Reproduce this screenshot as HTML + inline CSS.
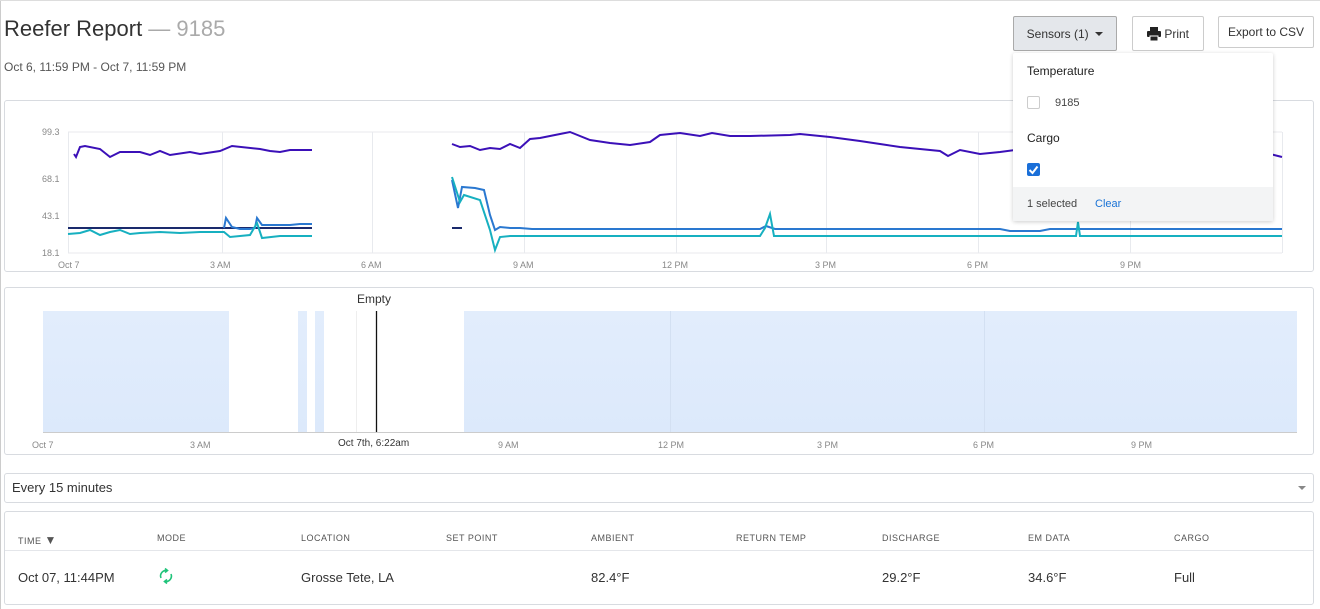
<!DOCTYPE html>
<html><head><meta charset="utf-8"><style>
*{box-sizing:border-box;margin:0;padding:0}
body{width:1320px;height:609px;background:#fff;font-family:"Liberation Sans",sans-serif;color:#333;position:relative;overflow:hidden}
.abs{position:absolute}
.panel{position:absolute;border:1px solid #d8dbe0;border-radius:3px;background:#fff}
.btn{position:absolute;border:1px solid #ccc;border-radius:2px;font-size:12px;color:#333;display:flex;align-items:center;justify-content:center;background:#fff}
.ax{position:absolute;font-size:9px;color:#888}
.th{position:absolute;top:533px;font-size:9px;color:#555;letter-spacing:.5px}
.td{position:absolute;top:570px;font-size:13px;color:#333}
</style></head><body>
<div class="abs" style="left:0;top:0;width:1px;height:609px;background:#ccc"></div>
<div class="abs" style="left:0;top:0;width:1320px;height:1px;background:#ddd"></div>
<div class="abs" style="left:4px;top:16px;font-size:22px;color:#333">Reefer Report <span style="color:#aaa">— 9185</span></div>
<div class="abs" style="left:4px;top:60px;font-size:12px;color:#555">Oct 6, 11:59 PM - Oct 7, 11:59 PM</div>

<div class="panel" style="left:4px;top:100px;width:1310px;height:172px"></div>
<svg class="abs" style="left:0;top:0" width="1320" height="280">
<g stroke="#e8eaee" stroke-width="1">
<line x1="68" y1="132" x2="1282" y2="132"/><line x1="68" y1="253" x2="1282" y2="253"/>
<line x1="68.5" y1="132" x2="68.5" y2="253"/><line x1="222.5" y1="132" x2="222.5" y2="253"/><line x1="372.5" y1="132" x2="372.5" y2="253"/><line x1="524.5" y1="132" x2="524.5" y2="253"/><line x1="676.5" y1="132" x2="676.5" y2="253"/><line x1="826.5" y1="132" x2="826.5" y2="253"/><line x1="978.5" y1="132" x2="978.5" y2="253"/><line x1="1130.5" y1="132" x2="1130.5" y2="253"/><line x1="1282.5" y1="132" x2="1282.5" y2="253"/>
</g>
<g fill="none" stroke-width="2">
<polyline stroke="#3b10b8" points="74,154 76,157 80,147 85,146 100,149 110,157 120,152 140,152 150,155 160,151 170,155 190,152 200,154 220,151 232,146 260,149 270,151 280,152 290,150 312,150"/>
<polyline stroke="#3b10b8" points="452,144 460,147 470,146 480,150 490,148 500,149 510,144 520,148 530,139 540,138 555,135 570,132 575,134 590,140 610,143 630,145 650,142 660,135 680,133 700,136 712,133 730,136 750,136 790,135 800,134 830,137 860,141 880,144 900,147 920,149 940,151 948,156 960,150 980,154 1000,152 1030,148 1060,145 1120,145 1200,148 1270,154 1282,157"/>
<line stroke="#1a2a6c" x1="68" y1="228" x2="312" y2="228"/>
<line stroke="#1a2a6c" x1="452" y1="228" x2="462" y2="228"/>
<polyline stroke="#2a78d0" points="224,228 226,218 232,227 240,229 250,229 255,228 257,218 262,225 290,225 300,224 312,224"/>
<polyline stroke="#2a78d0" points="452,180 458,208 462,187 475,188 484,190 490,215 495,230 500,227 510,228 520,228 532,229 680,229 760,229 766,226 775,229 1000,229 1010,231 1040,231 1050,229 1282,229"/>
<polyline stroke="#17b0c0" points="68,234 80,233 90,230 100,235 110,232 120,230 130,234 140,233 160,232 180,233 200,232 224,232 230,237 240,236 250,235 257,223 262,238 280,236 312,236"/>
<polyline stroke="#17b0c0" points="452,177 460,202 464,195 480,200 490,230 495,250 500,237 510,236 600,236 760,236 765,228 770,214 774,236 1076,236 1078,222 1080,236 1282,236"/>
</g>
</svg>
<div class="ax" style="left:42px;top:127px">99.3</div><div class="ax" style="left:42px;top:174px">68.1</div><div class="ax" style="left:42px;top:211px">43.1</div><div class="ax" style="left:42px;top:248px">18.1</div>
<div class="ax" style="left:58px;top:260px">Oct 7</div><div class="ax" style="left:210px;top:260px">3 AM</div><div class="ax" style="left:361px;top:260px">6 AM</div><div class="ax" style="left:513px;top:260px">9 AM</div><div class="ax" style="left:662px;top:260px">12 PM</div><div class="ax" style="left:815px;top:260px">3 PM</div><div class="ax" style="left:967px;top:260px">6 PM</div><div class="ax" style="left:1120px;top:260px">9 PM</div>

<div class="panel" style="left:4px;top:287px;width:1310px;height:168px"></div>
<svg class="abs" style="left:0;top:280px" width="1320" height="180">
<defs><linearGradient id="g" x1="0" y1="0" x2="0" y2="1"><stop offset="0" stop-color="#e2edfc"/><stop offset="1" stop-color="#dce9fb"/></linearGradient></defs>
<rect x="43" y="31" width="186" height="121" fill="url(#g)"/>
<rect x="298" y="31" width="9" height="121" fill="url(#g)"/>
<rect x="315" y="31" width="9" height="121" fill="url(#g)"/>
<rect x="464" y="31" width="833" height="121" fill="url(#g)"/>
<line x1="670.5" y1="31" x2="670.5" y2="152" stroke="#d3e0f2"/>
<line x1="984.5" y1="31" x2="984.5" y2="152" stroke="#d3e0f2"/>
<line x1="356.5" y1="31" x2="356.5" y2="152" stroke="#eee"/>
<line x1="376.5" y1="31" x2="376.5" y2="152" stroke="#111" stroke-width="1.3"/>
<line x1="43" y1="152.5" x2="1297" y2="152.5" stroke="#ccc"/>
</svg>
<div class="abs" style="left:357px;top:292px;font-size:12px;color:#333">Empty</div>
<div class="ax" style="left:32px;top:440px">Oct 7</div><div class="ax" style="left:190px;top:440px">3 AM</div><div class="abs" style="left:338px;top:438px;font-size:10px;color:#333">Oct 7th, 6:22am</div><div class="ax" style="left:498px;top:440px">9 AM</div><div class="ax" style="left:658px;top:440px">12 PM</div><div class="ax" style="left:817px;top:440px">3 PM</div><div class="ax" style="left:973px;top:440px">6 PM</div><div class="ax" style="left:1131px;top:440px">9 PM</div>

<div class="panel" style="left:4px;top:473px;width:1310px;height:30px"></div>
<div class="abs" style="left:12px;top:480px;font-size:13px;color:#333">Every 15 minutes</div>
<div class="abs" style="left:1298px;top:486px;border-left:4px solid transparent;border-right:4px solid transparent;border-top:4px solid #888"></div>

<div class="panel" style="left:4px;top:511px;width:1310px;height:94px"></div>
<div class="abs" style="left:5px;top:550px;width:1308px;height:1px;background:#e4e6ea"></div>
<div class="th" style="left:18px">TIME <span style="font-size:12px;color:#555">▼</span></div>
<div class="th" style="left:157px">MODE</div><div class="th" style="left:301px">LOCATION</div><div class="th" style="left:446px">SET POINT</div><div class="th" style="left:591px">AMBIENT</div><div class="th" style="left:736px">RETURN TEMP</div><div class="th" style="left:882px">DISCHARGE</div><div class="th" style="left:1028px">EM DATA</div><div class="th" style="left:1174px">CARGO</div>
<div class="td" style="left:18px">Oct 07, 11:44PM</div>
<svg class="abs" style="left:158px;top:567px" width="16" height="18" viewBox="0 0 16 18" fill="none" stroke="#1fc37a" stroke-width="1.6"><path d="M3 11 A5.5 5.5 0 0 1 9 3.5"/><path d="M7 1.5 L9.5 3.5 L7 5.5"/><path d="M13 7 A5.5 5.5 0 0 1 7 14.5"/><path d="M9 12.5 L6.5 14.5 L9 16.5"/></svg>
<div class="td" style="left:301px">Grosse Tete, LA</div><div class="td" style="left:591px">82.4°F</div><div class="td" style="left:882px">29.2°F</div><div class="td" style="left:1028px">34.6°F</div><div class="td" style="left:1174px">Full</div>

<div class="btn" style="left:1013px;top:16px;width:104px;height:35px;background:#e4e7eb;border-color:#aaa">Sensors (1)&nbsp;&nbsp;<span style="border-left:4px solid transparent;border-right:4px solid transparent;border-top:4px solid #333;display:inline-block"></span></div>
<div class="btn" style="left:1132px;top:16px;width:72px;height:35px"><svg width="14" height="14" viewBox="0 0 14 14"><rect x="3" y="0" width="8" height="4" fill="#222"/><rect x="0" y="4" width="14" height="6" rx="1" fill="#222"/><rect x="3" y="9" width="8" height="5" fill="#222" stroke="#fff" stroke-width="1"/></svg>&nbsp;Print</div>
<div class="btn" style="left:1218px;top:16px;width:96px;height:32px">Export to CSV</div>

<div class="abs" style="left:1013px;top:53px;width:260px;height:168px;background:#fff;box-shadow:0 1px 4px rgba(0,0,0,.2);border-radius:2px">
<div class="abs" style="left:14px;top:11px;font-size:12px;color:#222">Temperature</div>
<div class="abs" style="left:14px;top:43px;width:13px;height:13px;border:1px solid #ccc;border-radius:2px"></div>
<div class="abs" style="left:42px;top:44px;font-size:11px;color:#444">9185</div>
<div class="abs" style="left:14px;top:78px;font-size:12px;color:#222">Cargo</div>
<div class="abs" style="left:14px;top:110px;width:13px;height:13px;background:#1a6fd8;border-radius:2px"><svg width="13" height="13" viewBox="0 0 13 13"><path d="M2.5 7 L5.5 10 L10.5 3.5" stroke="#fff" stroke-width="2" fill="none"/></svg></div>
<div class="abs" style="left:0;top:134px;width:260px;height:34px;background:#f3f4f5"></div>
<div class="abs" style="left:14px;top:145px;font-size:11px;color:#444">1 selected</div>
<div class="abs" style="left:82px;top:145px;font-size:11px;color:#1a73d6">Clear</div>
</div>
</body></html>
